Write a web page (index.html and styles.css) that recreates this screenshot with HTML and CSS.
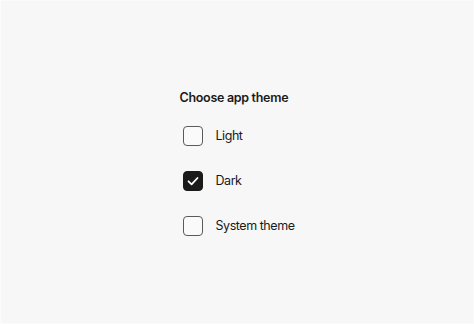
FILE: index.html
```html
<!DOCTYPE html>
<html>
<head>
<meta charset="utf-8">
<link rel="stylesheet" href="styles.css">
</head>
<body>
<div class="page">
  <div class="group">
    <div class="title">Choose app theme</div>
    <div class="options">
      <label class="option">
        <span class="box"></span>
        <span class="label">Light</span>
      </label>
      <label class="option">
        <span class="box checked">
          <svg viewBox="0 0 20 20" width="20" height="20"><path d="M5.5 10.3 L8.6 13.3 L14.5 7" fill="none" stroke="#fff" stroke-width="1.8" stroke-linecap="round" stroke-linejoin="round"/></svg>
        </span>
        <span class="label">Dark</span>
      </label>
      <label class="option">
        <span class="box"></span>
        <span class="label">System theme</span>
      </label>
    </div>
  </div>
</div>
</body>
</html>
```
FILE: styles.css
```css
html, body {
  margin: 0;
  padding: 0;
}
body {
  background: #f7f7f7;
  font-family: Inter, "Noto Sans", sans-serif;
  color: #1a1a1a;
}
.page {
  width: 474px;
  height: 324px;
  box-sizing: border-box;
  border: 1px solid #fbfbfb;
  padding-top: 2px;
  display: flex;
  align-items: center;
  justify-content: center;
}
.group {
  display: flex;
  flex-direction: column;
}
.title {
  font-size: 12.5px;
  font-weight: 600;
  line-height: 16px;
  letter-spacing: -0.3px;
  margin-bottom: 20px;
}
.options {
  display: flex;
  flex-direction: column;
  gap: 25px;
  padding-left: 3px;
}
.option {
  display: flex;
  align-items: center;
  gap: 13px;
  height: 20px;
}
.box {
  width: 20px;
  height: 20px;
  box-sizing: border-box;
  border: 1.5px solid #5a5a5a;
  border-radius: 4px;
  background: #fafafa;
  display: flex;
  align-items: center;
  justify-content: center;
}
.box.checked {
  background: #1a1a1a;
  border-color: #1a1a1a;
}
.box svg {
  display: block;
  flex: none;
}
.label {
  font-size: 12.5px;
  line-height: 16px;
  letter-spacing: -0.45px;
}
```
